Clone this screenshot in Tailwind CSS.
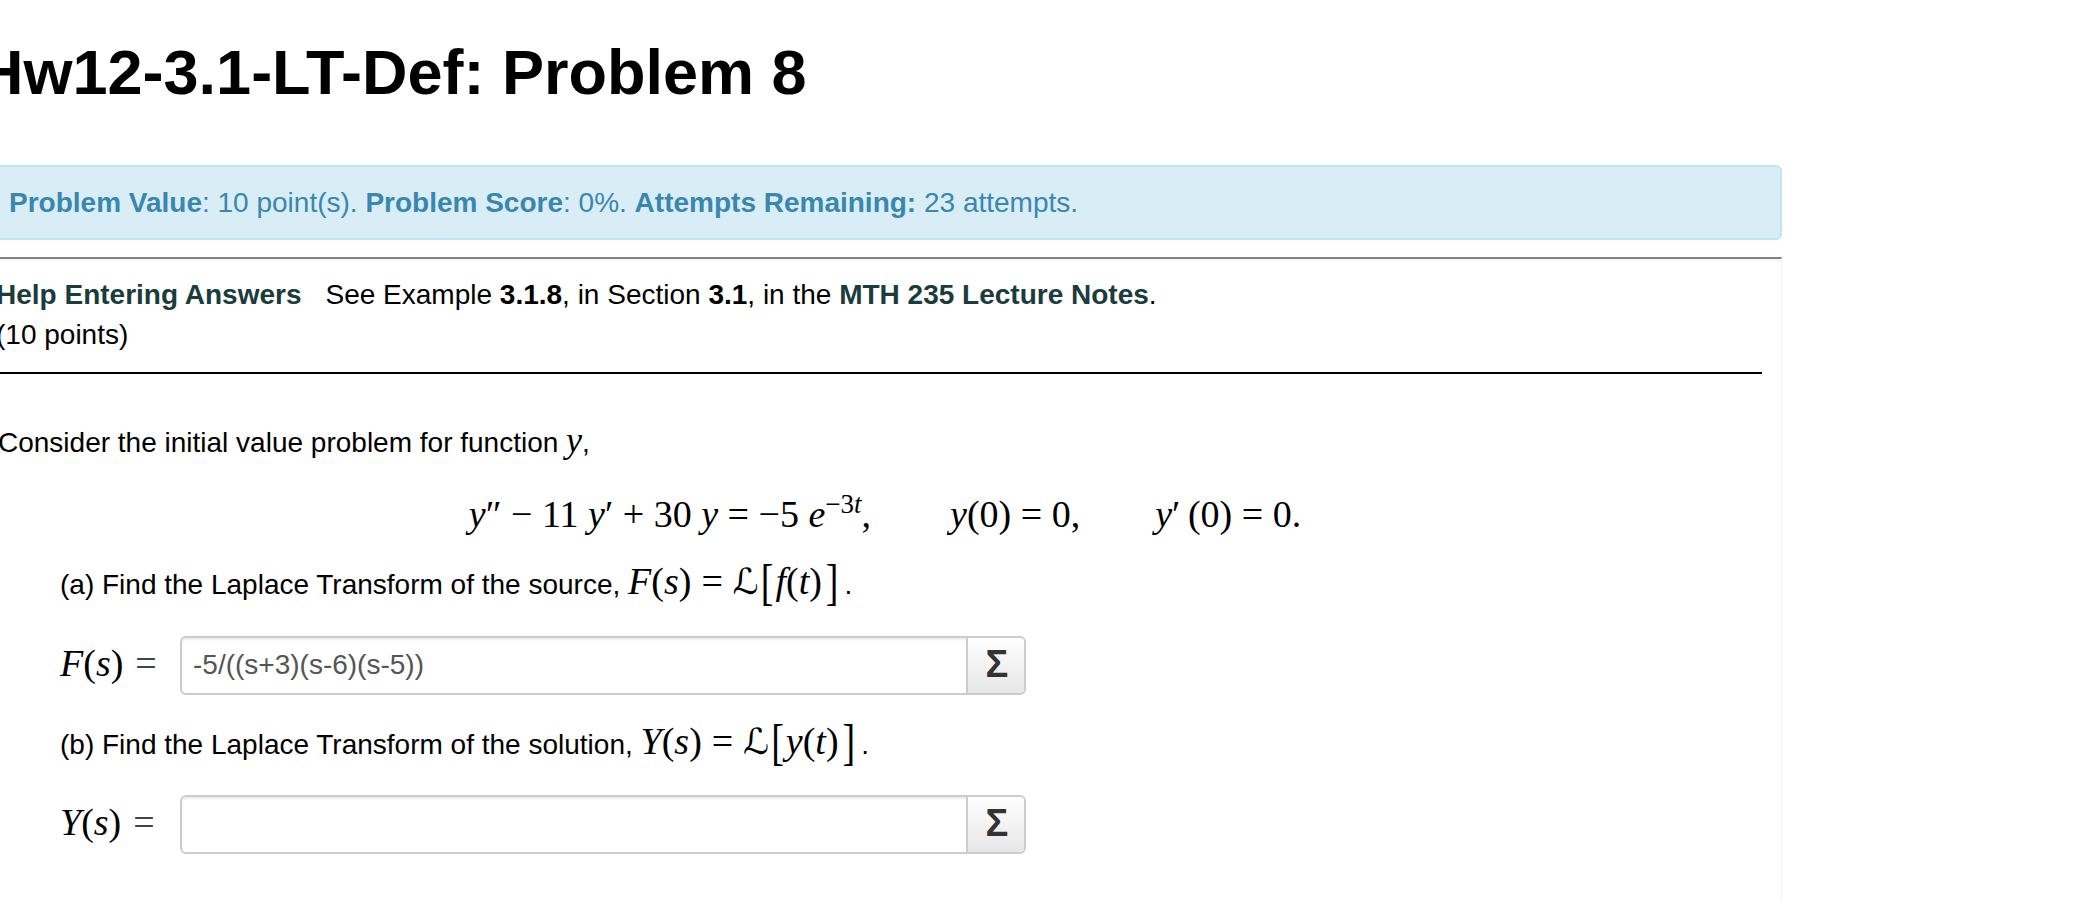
<!DOCTYPE html>
<html lang="en">
<head>
  <meta charset="UTF-8" />
  <title>Hw12-3.1-LT-Def: Problem 8</title>
  <script src="https://cdn.jsdelivr.net/npm/@tailwindcss/browser@4"></script>
</head>
<body class="bg-white font-['Liberation_Sans',Arial,sans-serif] text-black overflow-hidden h-[901px]">
  <div class="-ml-[12px] w-[1794px]">
    <h1 class="pt-[36px] h-[165px] -ml-[13px] text-[63px] leading-[72px] font-bold pl-[3px] whitespace-nowrap">Hw12-3.1-LT-Def: Problem 8</h1>

    <div class="h-[75px] flex items-center pl-[19px] bg-[#d9edf7] border-2 border-[#bce8f1] rounded-[6px] text-[28px] text-[#3a87ad] whitespace-nowrap">
      <span><b>Problem Value</b>: 10 point(s). <b>Problem Score</b>: 0%. <b>Attempts Remaining:</b> 23 attempts.</span>
    </div>

    <div class="mt-[17px] border-t-2 border-[#808080] border-r border-r-[#f4f4f4] shadow-[inset_0_4px_4px_-3px_#eee] h-[644px]">
      <div class="w-[1774px] text-[28px] leading-[40px]">
        <div class="pt-[16px] pl-[8px] h-[115px] border-b-2 border-black whitespace-nowrap">
          <p><b class="text-[#1a3c3c]">Help Entering Answers</b><span class="ml-[24px]">See Example <b>3.1.8</b>, in Section <b>3.1</b>, in the <b class="text-[#1a3c3c]">MTH 235 Lecture Notes</b>.</span></p>
          <p>(10 points)</p>
        </div>

        <p class="mt-[46px] pl-[10px] whitespace-nowrap">Consider the initial value problem for function <i class="font-['Liberation_Serif',serif] text-[36px]">y</i>,</p>

        <p class="mt-[26px] pl-[20px] h-[50px] text-center font-['Liberation_Serif',serif] text-[38px] leading-[50px] whitespace-nowrap">
          <i>y</i>″ − 11 <i>y</i>′ + 30 <i>y</i> = −5 <i>e</i><sup class="text-[27px] -top-[14px]">−3<i>t</i></sup>,<span class="inline-block w-[79px]"></span><i>y</i>(0) = 0,<span class="inline-block w-[75px]"></span><i>y</i>′&#8201;(0) = 0.
        </p>

        <p class="mt-[16px] pl-[72px] h-[52px] leading-[52px] whitespace-nowrap">(a) Find the Laplace Transform of the source, <span class="font-['Liberation_Serif',serif] text-[38px]"><i>F</i>(<i>s</i>)<span class="mx-[10px]">=</span><span class="font-['DejaVu_Sans',sans-serif] text-[36px]">ℒ</span><span class="inline-block scale-y-[1.35] font-light mx-[2px]">[</span><i>f</i>(<i>t</i>)<span class="inline-block scale-y-[1.35] font-light mx-[4px]">]</span></span><span class="ml-[2px]">.</span></p>

        <div class="mt-[29px] pl-[72px] flex items-center h-[59px]">
          <span class="w-[120px] pb-[6px] font-['Liberation_Serif',serif] text-[38px] whitespace-nowrap"><i>F</i>(<i>s</i>)<span class="ml-[12px] text-[#444]">=</span></span>
          <div class="flex w-[846px] h-[59px] border-2 border-[#ccc] rounded-[6px] shadow-[inset_0_2px_2px_#eee] bg-white">
            <span class="flex-1 pl-[11px] pt-[4px] text-[#555] text-[28px] leading-[46px]">-5/((s+3)(s-6)(s-5))</span>
            <span class="w-[58px] pb-[4px] pl-[2px] border-l-2 border-[#ccc] bg-gradient-to-b from-[#fff] to-[#e6e6e6] rounded-r-[4px] flex items-center justify-center text-[#333] font-bold text-[38px]">Σ</span>
          </div>
        </div>

        <p class="mt-[20px] pl-[72px] h-[52px] leading-[52px] whitespace-nowrap">(b) Find the Laplace Transform of the solution, <span class="font-['Liberation_Serif',serif] text-[38px]"><i>Y</i>(<i>s</i>)<span class="mx-[10px]">=</span><span class="font-['DejaVu_Sans',sans-serif] text-[36px]">ℒ</span><span class="inline-block scale-y-[1.35] font-light mx-[2px]">[</span><i>y</i>(<i>t</i>)<span class="inline-block scale-y-[1.35] font-light mx-[4px]">]</span></span><span class="ml-[2px]">.</span></p>

        <div class="mt-[28px] pl-[72px] flex items-center h-[59px]">
          <span class="w-[120px] pb-[6px] font-['Liberation_Serif',serif] text-[38px] whitespace-nowrap"><i>Y</i>(<i>s</i>)<span class="ml-[12px] text-[#444]">=</span></span>
          <div class="flex w-[846px] h-[59px] border-2 border-[#ccc] rounded-[6px] shadow-[inset_0_2px_2px_#eee] bg-white">
            <span class="flex-1"></span>
            <span class="w-[58px] pb-[4px] pl-[2px] border-l-2 border-[#ccc] bg-gradient-to-b from-[#fff] to-[#e6e6e6] rounded-r-[4px] flex items-center justify-center text-[#333] font-bold text-[38px]">Σ</span>
          </div>
        </div>
      </div>
    </div>
  </div>
</body>
</html>
